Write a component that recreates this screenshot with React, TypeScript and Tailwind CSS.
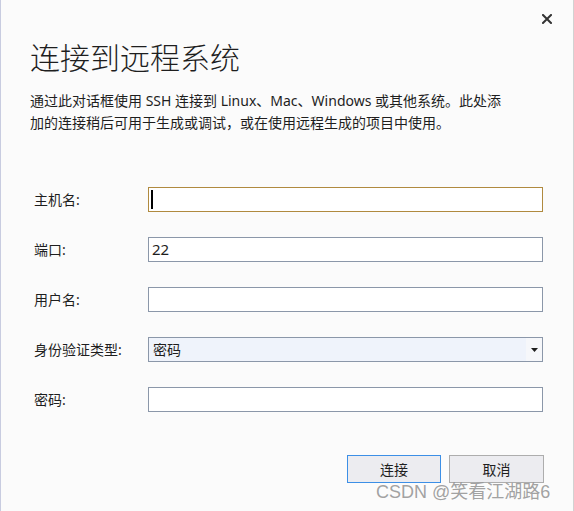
import React from "react";

const font = { fontFamily: '"Noto Sans", "Noto Sans CJK SC", sans-serif' };

function Row({ label, children }: { label: string; children: React.ReactNode }) {
  return (
    <div className="flex items-center h-[25px]">
      <div className="w-[114px] text-[14px] text-[#1e1e1e] leading-[25px] whitespace-nowrap">{label}</div>
      {children}
    </div>
  );
}

export default function App() {
  return (
    <div
      className="relative w-[574px] h-[511px] bg-[#fbfbfb] border-l border-l-[#c8cce0] border-r border-r-[#d2d2d2] flex flex-col"
      style={font}
    >
      <div className="h-[40px] flex justify-end items-start pt-[14px] pr-[21px]">
        <svg width="10" height="10" viewBox="0 0 10 10">
          <path d="M1 1 L9 9 M9 1 L1 9" stroke="#333" strokeWidth="2" strokeLinecap="square" />
        </svg>
      </div>
      <div className="pl-[29px] text-[30px] leading-[36px] font-light text-[#1e1e1e] whitespace-nowrap">
        连接到远程系统
      </div>
      <div className="mt-[14px] pl-[29px] text-[14px] leading-[22px] text-[#1e1e1e] whitespace-nowrap">
        <div>通过此对话框使用 SSH 连接到 Linux、Mac、Windows 或其他系统。此处添</div>
        <div>加的连接稍后可用于生成或调试，或在使用远程生成的项目中使用。</div>
      </div>
      <div className="mt-[53px] pl-[33px] flex flex-col gap-[25px]">
        <Row label="主机名:">
          <div className="w-[395px] h-[25px] border border-[#b08a3f] bg-white flex items-center pl-[2px]">
            <div className="w-[2px] h-[19px] bg-black" />
          </div>
        </Row>
        <Row label="端口:">
          <div className="w-[395px] h-[25px] border border-[#8b97a9] bg-white flex items-center pl-[3px] text-[15px] text-[#1e1e1e]">
            22
          </div>
        </Row>
        <Row label="用户名:">
          <div className="w-[395px] h-[25px] border border-[#8b97a9] bg-white" />
        </Row>
        <Row label="身份验证类型:">
          <div className="w-[395px] h-[25px] border border-[#8b97a9] bg-[#eff3fb] flex items-center">
            <div className="flex-1 pl-[4px] text-[14px] text-[#1e1e1e]">密码</div>
            <div className="w-[16px] h-full bg-[#f6f7fa] flex items-center justify-center">
              <svg width="7" height="4" viewBox="0 0 7 4">
                <path d="M0 0 L7 0 L3.5 4 Z" fill="#1e1e1e" />
              </svg>
            </div>
          </div>
        </Row>
        <Row label="密码:">
          <div className="w-[395px] h-[25px] border border-[#8b97a9] bg-white" />
        </Row>
      </div>
      <div className="mt-[43px] flex justify-end gap-[8px] pr-[29px]">
        <div className="w-[94px] h-[28px] border border-[#3c8fe6] bg-[#ececf0] flex items-center justify-center text-[14px] text-[#1e1e1e]">
          连接
        </div>
        <div className="w-[95px] h-[28px] border border-[#adadad] bg-[#ececf0] flex items-center justify-center text-[14px] text-[#1e1e1e]">
          取消
        </div>
      </div>
      <div
        className="absolute left-[375px] top-[480px] text-[18px] leading-[24px] text-[#8a8a8a]/80 whitespace-nowrap"
        style={{ fontFamily: '"Liberation Sans", "Noto Sans CJK SC", sans-serif' }}
      >
        CSDN @笑看江湖路6
      </div>
    </div>
  );
}
